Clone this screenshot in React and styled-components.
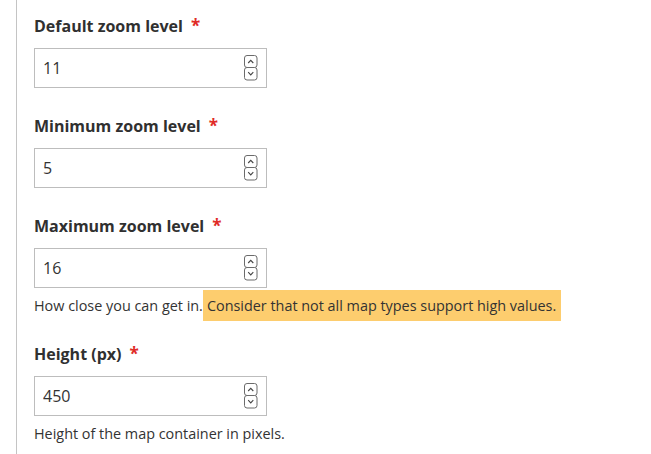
import styled, { createGlobalStyle } from "styled-components";

const GlobalStyle = createGlobalStyle`
	html, body {
		margin: 0;
		padding: 0;
		background: #fff;
	}
	body {
		font-family: "Open Sans", "Liberation Sans", sans-serif;
		color: #333;
	}
`;

const Page = styled.div`
	padding-left: 16px;
	height: 454px;
	overflow: hidden;
`;

const Panel = styled.div`
	border-left: 1px solid #c4c4c4;
	padding: 15px 0 0 17px;
	height: 100%;
	box-sizing: border-box;
`;

const Field = styled.div`
	margin-bottom: 27px;
`;

const Label = styled.label`
	display: block;
	font-size: 16px;
	font-weight: 700;
	line-height: 22px;
	color: #303030;
	margin-bottom: 11px;

	&::after {
		content: "*";
		color: #e02b27;
		font-size: 17px;
		margin-left: 8px;
	}
`;

const InputWrap = styled.div`
	position: relative;
	width: 233px;
`;

const NumberInput = styled.input.attrs({ type: "number" })`
	display: block;
	box-sizing: border-box;
	width: 100%;
	height: 40px;
	padding: 0 30px 0 8px;
	border: 1px solid #bdbdbd;
	border-radius: 0;
	font-family: "Open Sans", "Liberation Sans", sans-serif;
	font-size: 16px;
	color: #333;
	background: #fff;
	outline: none;
	-moz-appearance: textfield;

	&::-webkit-inner-spin-button,
	&::-webkit-outer-spin-button {
		-webkit-appearance: none;
		margin: 0;
	}
`;

const Spinner = styled.svg`
	position: absolute;
	top: 7px;
	right: 9px;
	width: 14px;
	height: 26px;
	pointer-events: none;
`;

const Description = styled.div`
	margin-top: 8px;
	font-size: 14.4px;
	line-height: 20px;
	color: #333;
`;

const Highlight = styled.span`
	background: #fdcd6e;
	padding: 6px 5px 6px 4px;
`;

const SpinIcon = () => (
	<Spinner viewBox="0 0 14 26">
		<rect x="0.5" y="0.5" width="12.5" height="12" rx="2.5" fill="#fff" stroke="#6b6b6b" />
		<rect x="0.5" y="12.5" width="12.5" height="12.5" rx="2.5" fill="#fff" stroke="#6b6b6b" />
		<path d="M4.2 8 L6.75 5.3 L9.3 8" fill="none" stroke="#444" strokeWidth="1.1" />
		<path d="M4.2 17.2 L6.75 19.9 L9.3 17.2" fill="none" stroke="#444" strokeWidth="1.1" />
	</Spinner>
);

const fields = [
	{ id: "default", label: "Default zoom level", value: 11 },
	{ id: "min", label: "Minimum zoom level", value: 5 },
	{
		id: "max",
		label: "Maximum zoom level",
		value: 16,
		description: (
			<>
				How close you can get in.
				<Highlight>Consider that not all map types support high values.</Highlight>
			</>
		),
	},
	{
		id: "height",
		label: "Height (px)",
		value: 450,
		description: "Height of the map container in pixels.",
	},
];

const App = () => {
	return (
		<>
			<GlobalStyle />
			<Page>
				<Panel>
					{fields.map((field) => (
						<Field key={field.id}>
							<Label htmlFor={field.id}>{field.label}</Label>
							<InputWrap>
								<NumberInput id={field.id} defaultValue={field.value} />
								<SpinIcon />
							</InputWrap>
							{field.description && <Description>{field.description}</Description>}
						</Field>
					))}
				</Panel>
			</Page>
		</>
	);
};

export default App;
